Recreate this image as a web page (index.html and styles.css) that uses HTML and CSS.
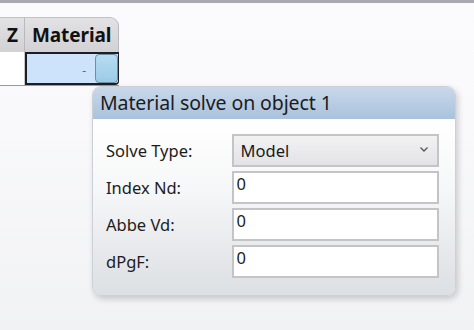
FILE: index.html
```html
<!DOCTYPE html>
<html>
<head>
<meta charset="utf-8">
<link rel="stylesheet" href="styles.css">
</head>
<body>
<div class="topbar"></div>
<div class="page">
  <div class="grid">
    <div class="row head">
      <div class="cell z">Z</div>
      <div class="cell mat">Material</div>
    </div>
    <div class="row data">
      <div class="cell z"></div>
      <div class="cell mat sel">
        <span class="dash">-</span>
        <span class="btn"></span>
      </div>
    </div>
  </div>
  <div class="popup">
    <div class="title">Material solve on object 1</div>
    <div class="body">
      <div class="field">
        <label>Solve Type:</label>
        <div class="select">
          <span>Model</span>
          <svg class="chev" width="10" height="7" viewBox="0 0 10 7"><path d="M1.5 1.5 L5 5 L8.5 1.5" fill="none" stroke="#555" stroke-width="1.3"/></svg>
        </div>
      </div>
      <div class="field">
        <label>Index Nd:</label>
        <div class="input">0</div>
      </div>
      <div class="field">
        <label>Abbe Vd:</label>
        <div class="input">0</div>
      </div>
      <div class="field">
        <label>dPgF:</label>
        <div class="input">0</div>
      </div>
    </div>
  </div>
</div>
</body>
</html>
```
FILE: styles.css
```css
html, body {
  margin: 0;
  padding: 0;
}
body {
  width: 474px;
  height: 330px;
  overflow: hidden;
  font-family: "Noto Sans", "Open Sans", sans-serif;
  color: #1a1a1a;
  background: #f3f4f6;
}
.topbar {
  height: 3px;
  background: #a9a9b1;
}
.page {
  position: relative;
  height: 327px;
  background: linear-gradient(#fbfbfd 0, #f9f9fb 120px, #f1f2f4 327px);
}
.grid {
  padding-top: 14px;
  width: 120px;
}
.row {
  display: flex;
}
.head {
  height: 35px;
}
.head .cell {
  background: linear-gradient(#e2e2e4, #d2d2d4);
  font-weight: bold;
  font-size: 19px;
  line-height: 35px;
  color: #111;
  border-right: 1px solid #b9b9bc;
  border-top: 1px solid #c2c2c4;
  box-sizing: border-box;
}
.head .z {
  width: 25px;
  text-align: right;
  padding-right: 6px;
}
.head .mat {
  width: 94px;
  border-top-right-radius: 9px;
  padding-left: 7px;
  letter-spacing: -0.1px;
}
.data {
  height: 33px;
  border-bottom: 1px solid #9a9a9c;
  width: 119px;
}
.data .z {
  width: 25px;
  background: #fff;
  border-right: 1px solid #c8c8c8;
  box-sizing: border-box;
}
.data .sel {
  width: 94px;
  box-sizing: border-box;
  background: #cde3fb;
  border: 2px solid #1d1d26;
  border-right-width: 1px;
  border-bottom-right-radius: 4px;
  display: flex;
  justify-content: flex-end;
  align-items: center;
  position: relative;
}
.dash {
  font-size: 12px;
  color: #666;
  margin-right: 9px;
  margin-top: 3px;
}
.btn {
  width: 23px;
  height: 29px;
  border-radius: 4px;
  background: linear-gradient(#b6dcf2, #9ccbe6);
  border: 1px solid #6d8ea6;
  box-sizing: border-box;
}
.popup {
  position: absolute;
  left: 92px;
  top: 83px;
  width: 364px;
  height: 210px;
  border-radius: 9px;
  border: 1px solid #cdd0d4;
  box-sizing: border-box;
  box-shadow: 2px 3px 6px rgba(0,0,0,0.18);
  overflow: hidden;
  display: flex;
  flex-direction: column;
}
.title {
  height: 32px;
  background: linear-gradient(#c9d8ea, #a9c2dd);
  font-size: 19.5px;
  line-height: 31px;
  padding-left: 7px;
  color: #1c1c1c;
  flex: none;
  letter-spacing: -0.1px;
}
.body {
  flex: 1;
  background: linear-gradient(#ffffff 0, #f6f7f8 40%, #dcdfe3 100%);
  padding: 15px 16px 0 13px;
  display: flex;
  flex-direction: column;
  gap: 4px;
}
.field {
  display: flex;
  align-items: center;
  height: 33px;
}
.field label {
  width: 126px;
  font-size: 16.5px;
  color: #1c1c1c;
}
.select, .input {
  width: 208px;
  height: 33px;
  box-sizing: border-box;
  border: 2px solid #c4c4c6;
}
.select {
  background: linear-gradient(#f2f2f3, #e3e3e5);
  display: flex;
  align-items: center;
  justify-content: space-between;
  padding: 0 8px 0 7px;
  font-size: 16.5px;
}
.chev {
  margin-top: -2px;
}
.input {
  background: #fff;
  font-size: 16.5px;
  padding: 1px 0 0 3px;
  line-height: 20px;
}
```
